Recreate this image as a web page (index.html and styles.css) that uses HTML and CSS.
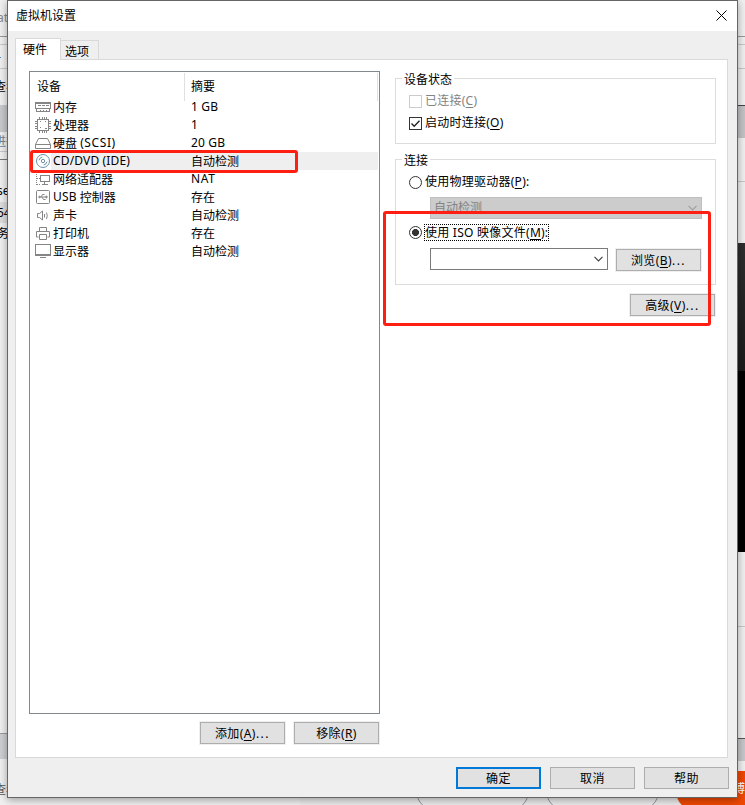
FILE: index.html
```html
<!DOCTYPE html>
<html lang="zh-CN">
<head>
<meta charset="UTF-8" />
<meta name="viewport" content="width=device-width, initial-scale=1.0"/>
<title>虚拟机设置</title>
<link rel="stylesheet" href="styles.css">
</head>
<body>
<!-- windows behind the dialog -->
<div class="desktop">
  <div class="behind">
    <div class="bar caption"><span>at</span></div>
    <div class="bar gap"></div>
    <div class="bar menu"><span>-</span></div>
    <div class="bar tools"><span>查看</span></div>
    <div class="bar shade"></div>
    <div class="bar crumb"><span>进行</span></div>
    <div class="bar gap dark"></div>
    <div class="bar side"><span>se</span></div>
    <div class="bar side sel"><span>54</span></div>
    <div class="bar side"><span>务</span></div>
    <div class="bar fill"></div>
    <div class="bar status"></div>
    <div class="bar foot"><span>查看</span></div>
  </div>
  <div class="behind right">
    <div class="bar r1"></div>
    <div class="bar r2"></div>
    <div class="bar r3"></div>
    <div class="bar r4"></div>
    <div class="bar r5"></div>
    <div class="bar r6"></div>
    <div class="bar r7"></div>
    <div class="screen"></div>
    <div class="bar r8"></div>
    <div class="bar r9"></div>
    <div class="bar r10"></div>
    <div class="pills">
      <span class="pill"></span>
      <span class="pill"></span>
      <span class="pill orange">博</span>
    </div>
  </div>
</div>

<div class="dialog">
  <header class="titlebar">
    <h1>虚拟机设置</h1>
    <svg class="close" width="11" height="11" viewBox="0 0 11 11"><path d="M.5 .5l10 10M10.5 .5l-10 10"/></svg>
  </header>
  <nav class="tabs">
    <div class="tab active">硬件</div>
    <div class="tab">选项</div>
  </nav>
  <main class="panel">
    <section class="left">
      <div class="list">
        <div class="row head"><span class="name">设备</span><span class="info">摘要</span></div>
        <div class="row">
          <svg class="ico" viewBox="0 0 16 18"><path class="crisp" d="M.5 4.5h15v6h-1v3h-13v-3h-1z"/><path class="crisp" d="M1 5.500h14M2.500 7.500h3M6.500 7.500h3M10.500 7.500h3M1 10.500h14M5 12.500h1M8 12.500h1M11 12.500h1"/></svg>
          <span class="name">内存</span><span class="info"><i>1 GB</i></span>
        </div>
        <div class="row">
          <svg class="ico" viewBox="0 0 16 18"><path class="crisp" d="M2.500 3.500h11v11h-11zM4.500 1v2M7.500 1v2M9.500 1v2M11.500 1v2M4.500 15v2M7.500 15v2M9.500 15v2M11.500 15v2M0 5.500h2M0 7.500h2M0 10.500h2M0 12.500h2M14 5.500h2M14 7.500h2M14 10.500h2M14 12.500h2M5 5.500h1M10 5.500h1M5 11.500h1M10 12h2"/></svg>
          <span class="name">处理器</span><span class="info"><i>1</i></span>
        </div>
        <div class="row">
          <svg class="ico" viewBox="0 0 16 18"><path d="M3.500 4.500h9l3 6v4h-15v-4zM.5 10.500h15"/></svg>
          <span class="name">硬盘 <i class="wide">(SCSI)</i></span><span class="info"><i>20 GB</i></span>
        </div>
        <div class="row selected">
          <svg class="ico cd" viewBox="0 0 16 18"><circle cx="8" cy="9" r="6.500"/><circle cx="8" cy="9" r="1.700"/><path d="M4 8.300A4.300 4.300 0 0 1 7.300 5M8.700 13A4.300 4.300 0 0 0 12 9.700"/></svg>
          <span class="name"><i>CD/DVD (IDE)</i></span><span class="info">自动检测</span>
        </div>
        <div class="row">
          <svg class="ico" viewBox="0 0 16 18"><path class="crisp" d="M5.500 5.500h9v6h-9zM9.500 12v2M7 14.500h6"/><path class="crisp dots" d="M1.500 2v13M2 2.500h8M2 8.500h3M2 14.500h4"/></svg>
          <span class="name">网络适配器</span><span class="info"><i class="wide">NAT</i></span>
        </div>
        <div class="row">
          <svg class="ico" viewBox="0 0 16 18"><rect x="1.500" y="2.500" width="13" height="13" rx="1"/><path d="M4 9h8M6 9l1.500-2.500h2M7 9l1.500 2.500h2"/><circle cx="4.500" cy="9" r=".8"/><path d="M11 7.800l1.500 1.200-1.500 1.200z"/></svg>
          <span class="name"><i>USB</i> 控制器</span><span class="info">存在</span>
        </div>
        <div class="row">
          <svg class="ico" viewBox="0 0 16 18"><path d="M2.500 7.500h2l3-2.500v9l-3-2.500h-2zM9.500 8v3.500M11.500 6.500q1.500 3.200 0 6.500"/></svg>
          <span class="name">声卡</span><span class="info">自动检测</span>
        </div>
        <div class="row">
          <svg class="ico" viewBox="0 0 16 18"><path d="M4.500 7.500v-4h7v4M3.500 13h-2v-5.500h13v5.500h-2M4.500 10.500h7v5h-7z"/></svg>
          <span class="name">打印机</span><span class="info">存在</span>
        </div>
        <div class="row">
          <svg class="ico" viewBox="0 0 16 18"><path class="crisp" d="M.5 2.500h15v11h-15zM1 12.500h14M5 15.500h6"/></svg>
          <span class="name">显示器</span><span class="info">自动检测</span>
        </div>
      </div>
      <div class="buttons">
        <button>添加(<u>A</u>)<span class="more">...</span></button>
        <button>移除(<u>R</u>)</button>
      </div>
    </section>

    <section class="options">
      <div class="group state">
        <h2>设备状态</h2>
        <div class="check disabled"><span class="box"></span><span>已连接(<u>C</u>)</span></div>
        <div class="check"><span class="box"><svg viewBox="0 0 11 11"><path d="M1.500 5.500l2.700 2.700 5.300-5.400"/></svg></span><span>启动时连接(<u>O</u>)</span></div>
      </div>
      <div class="group link">
        <h2>连接</h2>
        <div class="check"><span class="box radio"></span><span>使用物理驱动器(<u>P</u>):</span></div>
        <div class="combo off"><span>自动检测</span><svg viewBox="0 0 9 6"><path d="M.5 .8l4 4 4-4"/></svg></div>
        <div class="check"><span class="box radio on"></span><span class="focus">使用 ISO 映像文件(<u>M</u>):</span></div>
        <div class="pick">
          <div class="combo"><span></span><svg viewBox="0 0 9 6"><path d="M.5 .8l4 4 4-4"/></svg></div>
          <button>浏览(<u>B</u>)<span class="more">...</span></button>
        </div>
      </div>
      <button class="advanced">高级(<u>V</u>)<span class="more">...</span></button>
    </section>
  </main>
  <footer>
    <button class="default">确定</button>
    <button>取消</button>
    <button>帮助</button>
  </footer>
</div>

<div class="mark mark-row"></div>
<div class="mark mark-iso"></div>
</body>
</html>
```

FILE: styles.css
```css
* {box-sizing:border-box;}
html,body {margin:0;padding:0;}
body {
  position:relative;width:745px;height:805px;overflow:hidden;display:grid;background:#ececec;color:#000;
  font:12px/18px "Noto Sans","Noto Sans CJK SC",sans-serif;
}
h1,h2 {margin:0;font-size:12px;font-weight:normal;}
i {font-style:normal;position:relative;top:-1px;letter-spacing:.15px;}
i.wide {letter-spacing:.6px;}
u {text-underline-offset:2px;}
svg {fill:none;stroke:#858585;display:block;}

.desktop {grid-area:1/1;display:grid;grid-template-columns:300px 445px;height:805px;overflow:hidden;}
.behind {display:flex;flex-direction:column;height:805px;}
.bar {flex:none;border-bottom:1px solid #c8c8c8;background:#f0f0f0;white-space:nowrap;overflow:hidden;display:flex;align-items:center;}
.bar span {margin-left:-3px;}
.caption {height:37px;color:#888;border-color:#999;}
.gap {height:8px;}
.menu {height:24px;}
.tools {height:36px;border:none;}
.tools span,.crumb span,.foot span {margin-left:-6px;}
.shade {height:27px;background:#c8c9cc;border:none;}
.crumb {height:20px;color:#69859b;}
.gap.dark {border-color:#777;}
.side {height:21px;border:none;}
.side:nth-child(8) {height:42px;padding-top:20px;}
.side.sel {background:#ddd;}
.fill {flex:1;border-color:#999;}
.status {height:25px;background:#cecfd2;border:none;}
.foot {height:46px;padding-top:15px;color:#555;border:none;}

.r1 {height:37px;border-color:#999;}
.r2 {height:8px;}
.r3 {height:24px;}
.r4 {height:37px;border-color:#444;}
.r5 {height:32px;background:#c3c3c6;border:none;}
.r6 {height:44px;}
.r7 {height:61px;border:none;}
.screen {flex:none;height:309px;background:linear-gradient(#2e2e2e,#1a1a1a 128px,#000 128px);}
.r8 {height:75px;}
.r9 {height:112px;border-color:#555;}
.r10 {height:32px;border:none;background:linear-gradient(#c6c7ca 22px,#f0f0f0 22px);}
.pills {flex:none;display:flex;gap:17px;height:40px;padding-left:116px;}
.pill {width:113px;height:40px;flex:none;border:1px solid #9292a0;border-radius:20px;}
.pill.orange {background:#f04800;border:none;color:#fff;padding-left:57px;line-height:36px;}

.dialog {
  grid-area:1/1;position:relative;width:731px;height:798px;margin-left:7px;background:#efefef;border:1px solid #666;
  box-shadow:0 2px 8px rgba(0,0,0,.35);display:flex;flex-direction:column;
}
.titlebar {height:30px;flex:none;background:#fff;display:flex;align-items:center;justify-content:space-between;padding:0 10px 0 8px;}
.close {stroke:#000;margin-top:-2px;}
.tabs {display:flex;align-items:flex-end;height:28px;padding-left:7px;position:relative;z-index:1;}
.tab {width:38px;height:19px;border:1px solid #d9d9d9;border-left:none;border-bottom:none;padding-left:4px;line-height:21px;}
.tab.active {width:46px;height:22px;margin-bottom:-1px;background:#fff;border-left:1px solid #d9d9d9;padding-left:7px;}
.panel {flex:none;width:713px;height:699px;margin-left:7px;background:#fff;border:1px solid #d9d9d9;display:flex;padding:11px 0 0 13px;}
.left {width:351px;}
.list {height:643px;border:1px solid #828790;padding:1px;}
.row {display:grid;grid-template-columns:16px 139px 1fr;height:18px;padding-left:4px;line-height:20px;white-space:nowrap;}
.row .name {padding-left:2px;}
.row .info {padding-left:1px;}
.head {grid-template-columns:150px 193px;height:25px;line-height:28px;}
.head .name,.head .info {border-right:1px solid #e0e0e0;}
.head .info {padding-left:6px;}
.selected {background:linear-gradient(90deg,#fff 20px,#efefef 20px);}
.ico {width:16px;height:18px;}
.ico.cd {stroke:#6d91a8;}
.crisp {shape-rendering:crispEdges;}
.dots {stroke-dasharray:1 1;}

button {
  width:85px;height:22px;flex:none;border:1px solid #adadad;background:#e1e1e1;padding:0;font:inherit;color:#000;
  line-height:22px;letter-spacing:.4px;outline:1px solid #efefef;
}
button.default {border:2px solid #0078d7;line-height:20px;}
.more {letter-spacing:1.5px;}
.buttons {display:flex;justify-content:flex-end;gap:9px;padding:8px 1px 0 0;}

.options {width:320px;margin-left:15px;padding-top:7px;display:flex;flex-direction:column;}
.group {border:1px solid #dcdcdc;position:relative;padding-left:13px;width:321px;}
.group h2 {position:absolute;left:6px;top:-8px;padding:0 2px;background:#fff;}
.state {height:66px;padding-top:13px;}
.link {height:126px;margin-top:15px;padding-top:13px;}
.check {display:flex;align-items:center;height:18px;margin-bottom:4px;letter-spacing:.25px;}
.disabled {color:#838383;}
.disabled span {line-height:20px;}
.box {width:13px;height:13px;flex:none;border:1px solid #333;margin-right:3px;}
.disabled .box {border-color:#ccc;}
.box svg {width:11px;height:11px;stroke:#222;stroke-width:1.4;}
.radio {border-radius:50%;}
.radio.on {background:radial-gradient(circle,#333 3.200px,#fff 3.800px);}
.focus {outline:1px dotted #000;line-height:15px;}
.combo {width:178px;height:22px;border:1px solid #7a7a7a;display:flex;align-items:center;justify-content:space-between;padding:0 4px 0 3px;}
.combo svg {width:9px;height:6px;stroke:#444;stroke-width:1.200;}
.combo.off {width:272px;margin:6px 0 4px 21px;background:#ccc;border-color:#bfbfbf;color:#838383;line-height:22px;}
.combo.off svg {stroke:#a0a0a0;}
.pick {display:flex;gap:8px;margin:7px 0 0 21px;}
.pick button {margin-top:1px;}
.advanced {align-self:flex-end;margin-top:9px;}
.link .check {margin-bottom:0;}

footer {display:flex;justify-content:flex-end;gap:9px;padding:9px 8px 0 0;}

/* red frames drawn over the dialog */
.mark {position:absolute;border:3px solid #ff1f12;border-radius:3px;}
.mark-row {left:30px;top:150px;width:268px;height:23px;}
.mark-iso {left:383px;top:211px;width:328px;height:115px;}
```
